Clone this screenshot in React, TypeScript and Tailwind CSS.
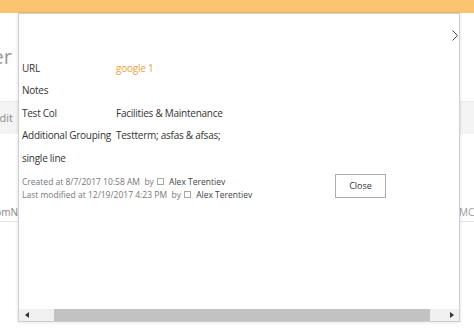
import React from "react";

const rows: { label: string; value: React.ReactNode }[] = [
  { label: "URL", value: <span className="text-[#eaa23a]">google 1</span> },
  { label: "Notes", value: "" },
  { label: "Test Col", value: "Facilities & Maintenance" },
  { label: "Additional Grouping", value: "Testterm; asfas & afsas;" },
];

function Box() {
  return <span className="inline-block w-[7px] h-[7px] border border-[#a8a8a8] mx-[3px] align-[-0.5px]" />;
}

export default function App() {
  return (
    <div className="relative w-[474px] h-[332px] overflow-hidden bg-white font-['Open_Sans',sans-serif] text-[#333]">
      {/* background page */}
      <div className="h-[13px] bg-[#fcc370]" />
      <div className="h-[34px]" />
      <div className="flex h-[20px] items-center">
        <div className="w-[18px] overflow-hidden flex justify-end pr-[6px]">
          <span className="text-[20px] leading-none text-[#999] whitespace-nowrap">Viewer</span>
        </div>
      </div>
      <div className="h-[34px]" />
      <div className="flex h-[33px] bg-[#f4f4f4] items-center border-t border-[#ececec]">
        <div className="w-[18px] overflow-hidden flex justify-end pr-[5px]">
          <span className="text-[11px] text-[#888] whitespace-nowrap">Edit</span>
        </div>
      </div>
      <div className="h-[69px]" />
      <div className="flex h-[19px] items-center justify-between border-b border-[#e3e3e3]">
        <div className="w-[18px] overflow-hidden flex justify-end">
          <span className="text-[10px] text-[#888] whitespace-nowrap">BottomN</span>
        </div>
        <div className="w-[15px] overflow-hidden flex justify-start">
          <span className="text-[10px] text-[#999] whitespace-nowrap">MC</span>
        </div>
      </div>

      {/* dialog */}
      <div className="absolute left-[18px] top-[13px] w-[442px] h-[309px] bg-white border border-[#cfcfcf] shadow-[0_0_3px_rgba(0,0,0,0.15)] flex flex-col">
        <div className="h-[43px] flex justify-end items-start pt-[16px]">
          <svg width="6" height="11" viewBox="0 0 6 11" className="mr-[1px]">
            <path d="M0.5 0.5 L5.5 5.5 L0.5 10.5" fill="none" stroke="#444" strokeWidth="1" />
          </svg>
        </div>
        <div className="pl-[3px] text-[10px] tracking-[-0.25px]">
          {rows.map((r) => (
            <div key={r.label} className="flex h-[22.5px] items-center whitespace-nowrap">
              <div className="w-[94px]">{r.label}</div>
              <div>{r.value}</div>
            </div>
          ))}
          <div className="flex h-[22.5px] items-center">single line</div>
        </div>
        <div className="flex items-start pl-[3px] mt-[4px]">
          <div className="w-[313px] pt-[1px] text-[8.5px] leading-[13px] text-[#777] whitespace-nowrap">
            <div>
              Created at 8/7/2017 10:58 AM&nbsp; by<Box /> <span className="text-[#444]">Alex Terentiev</span>
            </div>
            <div>
              Last modified at 12/19/2017 4:23 PM&nbsp; by<Box /> <span className="text-[#444]">Alex Terentiev</span>
            </div>
          </div>
          <button className="w-[51px] h-[24px] border border-[#ababab] bg-white text-[9px] text-[#333] flex items-center justify-center">
            Close
          </button>
        </div>
        <div className="mt-auto h-[12px] flex items-stretch bg-[#f0f0f0]">
          <div className="w-[35px] flex items-center pl-[6px]">
            <svg width="4" height="6" viewBox="0 0 4 6"><path d="M4 0 L0 3 L4 6 Z" fill="#333" /></svg>
          </div>
          <div className="w-[376px] bg-[#c2c2c2]" />
          <div className="flex-1 flex items-center justify-end pr-[5px]">
            <svg width="4" height="6" viewBox="0 0 4 6"><path d="M0 0 L4 3 L0 6 Z" fill="#333" /></svg>
          </div>
        </div>
      </div>
    </div>
  );
}
